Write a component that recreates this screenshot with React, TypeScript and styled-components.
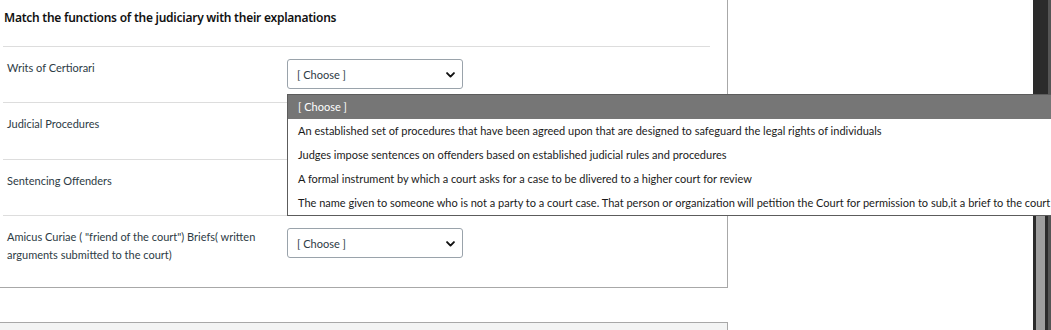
import styled, { createGlobalStyle } from 'styled-components'

const GlobalStyle = createGlobalStyle`
  html, body {
    margin: 0;
    padding: 0;
    background: #fff;
  }
  body {
    font-family: Lato, 'Liberation Sans', sans-serif;
    color: #2d3b45;
  }
`

const Page = styled.div`
  position: relative;
  display: flex;
  width: 1051px;
  height: 330px;
  overflow: hidden;
`

const Main = styled.div`
  flex: 1;
  display: flex;
  flex-direction: column;
`

const QuestionPanel = styled.div`
  width: 727px;
  border-right: 1px solid #a8a8a8;
  border-bottom: 1px solid #a8a8a8;
  padding-bottom: 10px;
`

const Title = styled.div`
  height: 36px;
  padding: 10px 0 0 4px;
  font-family: 'Noto Sans', Lato, sans-serif;
  font-weight: 600;
  font-size: 12px;
  line-height: 16px;
  color: #111;
  letter-spacing: -0.25px;
`

const Row = styled.div`
  display: flex;
  align-items: flex-start;
  margin: 0 17px 0 3px;
  padding: 12px 0 13px 4px;
  border-top: 1px solid #dddddd;

  &:nth-child(3) {
    padding-bottom: 14px;
  }
`

const Label = styled.div`
  width: 276px;
  padding-right: 4px;
  font-size: 11px;
  line-height: 18px;
  color: #2d3b45;
`

const SelectBox = styled.div`
  box-sizing: border-box;
  display: flex;
  align-items: center;
  justify-content: space-between;
  width: 176px;
  height: 30px;
  padding: 0 6px 0 9px;
  border: 1px solid #9aa3ab;
  border-radius: 3px;
  background: #fff;
  font-size: 11px;
  color: #2d3b45;
`

const Chevron = styled.svg`
  width: 11px;
  height: 11px;
  color: #111;
`

const NextPanel = styled.div`
  margin-top: 34px;
  width: 727px;
  flex: 1;
  background: #f3f4f4;
  border-top: 1px solid #a8a8a8;
  border-right: 1px solid #a8a8a8;
`

const Scrollbar = styled.div`
  position: relative;
  width: 15px;
  background: #2b2b2b;
  border-right: 3px solid #555;
`

const Thumb = styled.div`
  position: absolute;
  left: 3px;
  right: 3px;
  top: 200px;
  bottom: 0;
  background: #9e9e9e;
`

const DropList = styled.div`
  position: absolute;
  left: 287px;
  top: 94px;
  width: 800px;
  border: 1px solid #5c5c5c;
  background: #fff;
  white-space: nowrap;
`

const Option = styled.div<{ $active?: boolean }>`
  height: 24px;
  line-height: 24px;
  padding-left: 10px;
  font-size: 11px;
  background: ${({ $active }) => ($active ? '#767676' : '#fff')};
  color: ${({ $active }) => ($active ? '#fff' : '#1a1a1a')};
`

const rows = [
  'Writs of Certiorari',
  'Judicial Procedures',
  'Sentencing Offenders',
  'Amicus Curiae ( "friend of the court") Briefs( written arguments submitted to the court)',
]

const options = [
  'An established set of procedures that have been agreed upon that are designed to safeguard the legal rights of individuals',
  'Judges impose sentences on offenders based on established judicial rules and procedures',
  'A formal instrument by which a court asks for a case to be dlivered to a higher court for review',
  'The name given to someone who is not a party to a court case. That person or organization will petition the Court for permission to sub,it a brief to the court',
]

const Select = () => (
  <SelectBox>
    <span>[ Choose ]</span>
    <Chevron viewBox="0 0 16 16">
      <path d="M3 6l5 5 5-5" fill="none" stroke="currentColor" strokeWidth="2.8" strokeLinecap="round" strokeLinejoin="round" />
    </Chevron>
  </SelectBox>
)

export default function App() {
  return (
    <>
      <GlobalStyle />
      <Page>
        <Main>
          <QuestionPanel>
            <Title>Match the functions of the judiciary with their explanations</Title>
            {rows.map((r) => (
              <Row key={r}>
                <Label>{r}</Label>
                <Select />
              </Row>
            ))}
          </QuestionPanel>
          <NextPanel />
        </Main>
        <Scrollbar>
          <Thumb />
        </Scrollbar>
        <DropList>
          <Option $active>[ Choose ]</Option>
          {options.map((o) => (
            <Option key={o}>{o}</Option>
          ))}
        </DropList>
      </Page>
    </>
  )
}
